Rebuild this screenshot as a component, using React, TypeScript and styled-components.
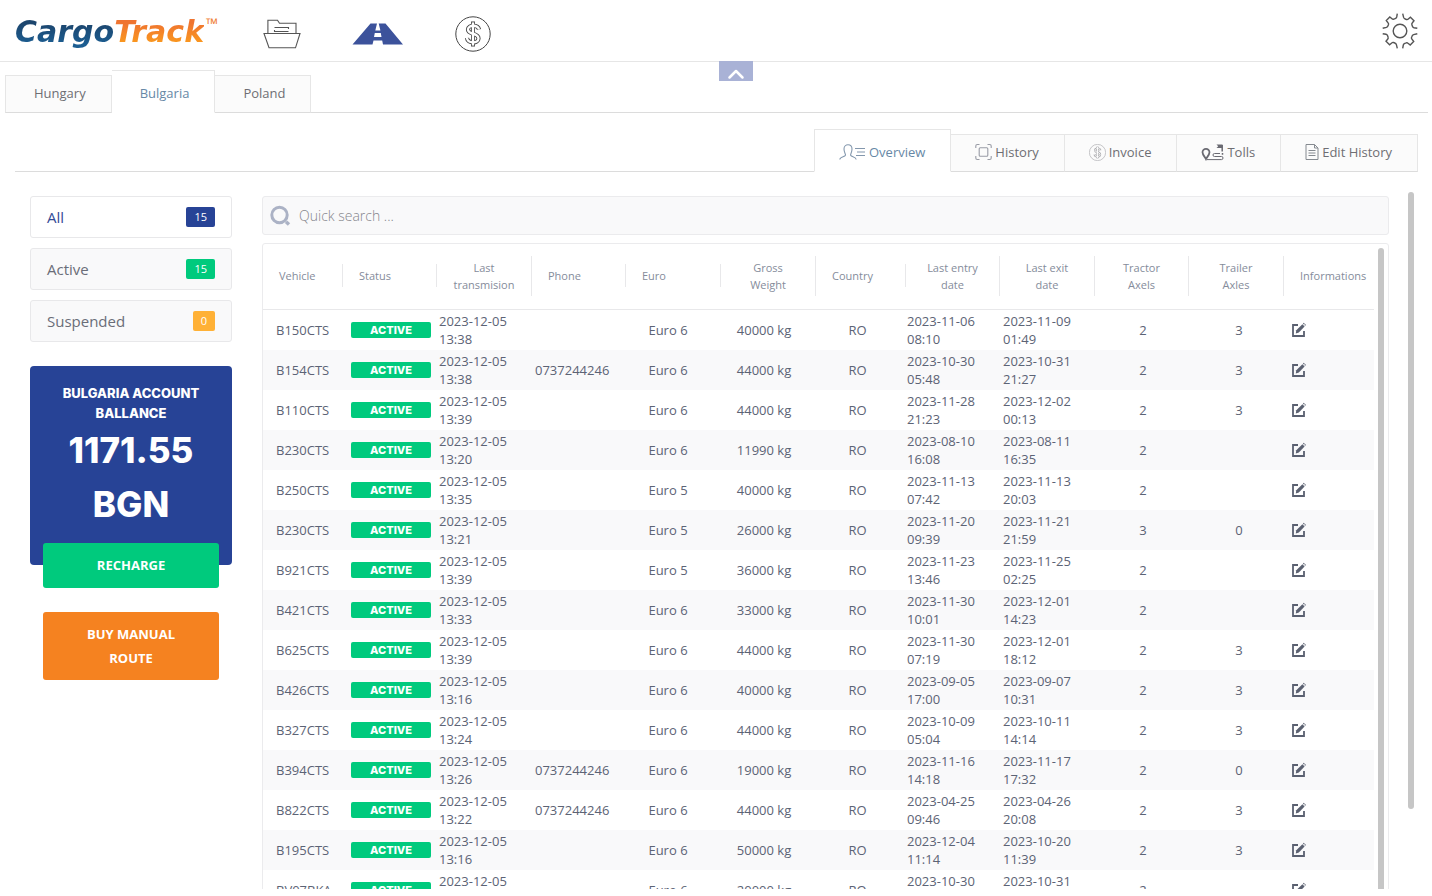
import React from "react";
import styled, { createGlobalStyle, css } from "styled-components";

const GlobalStyle = createGlobalStyle`
  *, *::before, *::after { box-sizing: border-box; }
  body {
    margin: 0;
    background: #fff;
    color: #5c6375;
    font-family: "Open Sans", "Noto Sans", sans-serif;
    font-size: 13px;
  }
  button, input { font-family: inherit; }
  a { color: inherit; text-decoration: none; }
`;

const Shell = styled.div`
  display: flex;
  flex-direction: column;
  height: 100vh;
  padding-bottom: 7px;
  overflow: hidden;
`;

/* ---------- header ---------- */

const Header = styled.header`
  position: relative;
  display: flex;
  align-items: center;
  flex: none;
  height: 62px;
  padding: 0 14px 0 15px;
  border-bottom: 1px solid #e6e6e6;
`;

const Logo = styled.a`
  display: flex;
  align-items: flex-start;
  gap: 2px;
  width: 202px;
  margin-right: 46px;
  padding-top: 2px;
  font: italic bold 30px/36px "DejaVu Sans", sans-serif;
`;

const LogoName = styled.span`
  display: flex;
`;

const LogoPart = styled.span<{ $from: string; $to: string }>`
  background: linear-gradient(${(p) => p.$from} 25%, ${(p) => p.$to} 85%);
  background-clip: text;
  -webkit-background-clip: text;
  color: transparent;
`;

const Trademark = styled.sup`
  color: #f08038;
  font: 16px/20px "Open Sans", sans-serif;
`;

const MainNav = styled.nav`
  display: flex;
  align-items: center;
  gap: 51px;
  flex: 1;
`;

const NavLink = styled.a`
  display: flex;
  padding-top: 6px;
`;

const IconButton = styled.button`
  display: flex;
  padding: 0;
  border: 0;
  background: none;
`;

const CollapseButton = styled.button`
  position: absolute;
  top: 61px;
  left: calc(50% + 3px);
  display: flex;
  justify-content: center;
  width: 34px;
  height: 20px;
  padding: 7px 0 0;
  border: 0;
  background: #a9b2d6;
`;

/* ---------- tabs ---------- */

const TabBar = styled.nav<{ $end?: boolean }>`
  display: flex;
  align-items: flex-end;
  flex: none;
  height: ${(p) => (p.$end ? 59 : 51)}px;
  margin: ${(p) => (p.$end ? "0 14px 0 15px" : "0 4px 0 5px")};
  justify-content: ${(p) => (p.$end ? "flex-end" : "flex-start")};
  border-bottom: 1px solid #dcdcdc;
`;

const Tab = styled.a<{ $active?: boolean; $wide?: boolean }>`
  display: flex;
  align-items: center;
  gap: 3px;
  margin-bottom: -1px;
  padding: 0 25px 2px ${(p) => (p.$wide ? 28 : 24)}px;
  border: 1px solid #e6e6e6;
  border-left-width: 0;
  border-bottom-color: #dcdcdc;
  background: #fbfbfb;
  color: #6e6e73;
  line-height: 34px;
  &:first-child { border-left-width: 1px; }
  ${(p) =>
    p.$active &&
    css`
      padding-top: 5px;
      border-bottom-color: #fff;
      background: #fff;
      color: #6788a6;
    `}
`;

/* ---------- content ---------- */

const Content = styled.div`
  display: flex;
  align-items: flex-start;
  flex: 1;
  min-height: 0;
  overflow: hidden;
  padding: 20px 18px 0 30px;
`;

const Sidebar = styled.aside`
  flex: none;
  width: 202px;
  margin: 4px 30px 0 0;
`;

const FilterList = styled.div`
  display: flex;
  flex-direction: column;
  gap: 10px;
`;

const FilterButton = styled.button<{ $selected?: boolean }>`
  display: flex;
  align-items: center;
  justify-content: space-between;
  height: 42px;
  padding: 0 16px;
  border: 1px solid #e8e8ea;
  border-radius: 3px;
  background: ${(p) => (p.$selected ? "#fff" : "#f9f9fa")};
  color: ${(p) => (p.$selected ? "#344b96" : "#6a6d78")};
  font-size: 15px;
`;

const Count = styled.span<{ $color: string }>`
  padding: 0 8px;
  border-radius: 2px;
  background: ${(p) => p.$color};
  color: #fff;
  font-size: 11px;
  line-height: 20px;
`;

const BalanceCard = styled.section`
  display: flex;
  flex-direction: column;
  margin-top: 24px;
  padding: 17px 13px 0;
  border-radius: 4px;
  background: #274396;
  color: #fff;
  font-family: Inter, sans-serif;
  text-align: center;
`;

const BalanceTitle = styled.h2`
  margin: 0;
  font-size: 13px;
  font-weight: 800;
  line-height: 20px;
`;

const BalanceAmount = styled.p`
  margin: 0 20px;
  font-size: 35px;
  font-weight: 800;
  line-height: 54px;
`;

const ActionButton = styled.button<{ $color: string }>`
  padding: 10px 30px;
  border: 0;
  border-radius: 3px;
  background: ${(p) => p.$color};
  color: #fff;
  font: bold 13px/24px "Open Sans", sans-serif;
`;

const RechargeButton = styled(ActionButton)`
  height: 45px;
  margin: 12px 0 -23px;
  padding-bottom: 12px;
`;

const RouteButton = styled(ActionButton)`
  width: 176px;
  margin: 47px 13px 0;
`;

const Main = styled.main`
  flex: 1;
  min-width: 0;
  margin-top: 4px;
`;

const SearchBox = styled.label`
  display: flex;
  align-items: center;
  gap: 8px;
  height: 39px;
  padding: 0 7px;
  border: 1px solid #ebebed;
  border-radius: 3px;
  background: #f9f9fa;
`;

const SearchInput = styled.input`
  flex: 1;
  padding: 0;
  border: 0;
  outline: 0;
  background: none;
  color: #5c6375;
  font-size: 14px;
  font-weight: 300;
  &::placeholder { color: #85858c; opacity: 1; }
`;

const TablePanel = styled.div`
  display: flex;
  align-items: flex-start;
  gap: 4px;
  margin-top: 8px;
  padding-right: 4px;
  border: 1px solid #ebebed;
  border-radius: 3px;
`;

const Thumb = styled.div`
  flex: none;
  width: 6px;
  border-radius: 3px;
  background: #c6c6c6;
`;

const TableThumb = styled(Thumb)`
  align-self: stretch;
  margin-top: 4px;
`;

const PageThumb = styled(Thumb)`
  height: 617px;
  margin-left: 19px;
`;

const Table = styled.table`
  display: block;
  flex: 1;
  min-width: 0;
`;

const Head = styled.thead`
  display: block;
  border-bottom: 1px solid #e8e8ea;
`;

const Body = styled.tbody`
  display: block;
`;

const HeadRow = styled.tr`
  display: grid;
  grid-template-columns: 80fr 94fr 95fr 94fr 95fr 95fr 90fr 94fr 95fr 94fr 95fr 90fr;
  align-items: center;
  height: 65px;
  padding-bottom: 2px;
`;

const HeadCell = styled.th`
  display: flex;
  min-width: 0;
  padding: 3px 16px;
  border-right: 1px solid #e8e8ea;
  color: #858c9b;
  font-size: 11px;
  font-weight: 400;
  line-height: 17px;
  text-align: center;
  &:last-child { border-right: 0; }
`;

const BodyRow = styled.tr`
  display: grid;
  grid-template-columns: 84fr 88fr 96fr 89fr 96fr 96fr 91fr 96fr 96fr 96fr 96fr 87fr;
  align-items: center;
  height: 40px;
  &:nth-child(even) { background: #f9f9fa; }
`;

const Cell = styled.td<{ $align?: "left" | "center" }>`
  min-width: 0;
  padding: 0 4px;
  line-height: 18px;
  text-align: ${(p) => p.$align ?? "left"};
`;

const VehicleCell = styled(Cell)`
  padding-left: 13px;
`;

const DateText = styled.time`
  display: block;
  width: 72px;
`;

const StatusTag = styled.span`
  display: block;
  border-radius: 2px;
  background: #00ca7d;
  color: #fff;
  font: 800 11px/16px Inter, sans-serif;
  text-align: center;
`;

/* ---------- icons ---------- */

const FolderIcon = () => (
  <svg width="38" height="30" viewBox="0 0 38 30" fill="none" stroke="#555" strokeWidth="1.1">
    <path d="M4.900 14.500V1.200H14.500L16.500 4.300H33V14.500M1 14.500H37L32.500 28.800H6ZM11.500 8.500H25.500V10M25.500 12.500H11.500V11" />
  </svg>
);

const RoadIcon = () => (
  <svg width="52" height="22" viewBox="0 0 52 22" fill="#3c529b" fillRule="evenodd">
    <path d="M18.500 .5H33.500L51 21.500H.5ZM25 .5L23.300 7.500H28.400L26.700 .5ZM22.800 10L22 14H29.500L28.800 10ZM21.500 17.500L20.500 21.500H31L30.200 17.500Z" />
  </svg>
);

const DollarIcon = ({ size, width, color }: { size: number; width: number; color: string }) => (
  <svg width={size} height={size} viewBox="0 0 36 36" fill="none" stroke={color}>
    <circle cx="18" cy="18" r="17.200" strokeWidth={width} />
    <path d="M18 5.500V30.500" strokeWidth={3 + width} />
    <path d="M24 13.500C23 8.500 13 8.500 13 13.500C13 19 23.500 16.500 23.500 22.500C23.500 28 12.500 27.500 12 22" strokeWidth={3.2 + width} />
    <path d="M18 6.400V29.600" stroke="#fff" strokeWidth={3.4 - width} />
    <path d="M24 13.500C23 8.500 13 8.500 13 13.500C13 19 23.500 16.500 23.500 22.500C23.500 28 12.500 27.500 12 22" stroke="#fff" strokeWidth={3.4 - width} />
  </svg>
);

const GearIcon = () => (
  <svg width="36" height="36" viewBox="-18 -18 36 36" fill="none" stroke="#555" strokeWidth="1.400">
    <circle r="6.800" />
    {[0, 90, 180, 270].map((angle) => (
      <path
        key={angle}
        transform={`rotate(${angle})`}
        d="M2.700-17.300L3.600-13.600Q4-12.400 5.200-12L6.500-11.500Q7.500-11.200 8.300-12L10.400-13.700L14-10.200L12.200-8Q11.500-7.200 11.900-6.200L12.400-4.800Q12.800-3.600 14-3.300L17.300-2.700"
      />
    ))}
  </svg>
);

const ChevronUpIcon = () => (
  <svg width="18" height="12" viewBox="0 0 18 12" fill="none" stroke="#fff" strokeWidth="2.500" strokeLinecap="round" strokeLinejoin="round">
    <path d="M2.500 9.500L9 3L15.500 9.500" />
  </svg>
);

const PersonIcon = () => (
  <svg width="27" height="18" viewBox="0 0 27 18" fill="none" stroke="#8397ad" strokeWidth="1.100">
    <path d="M.8 16.500C1 13.500 5.500 14 6.500 12.200C6.900 11.400 5 9.800 5 6C5 .4 13 .4 13 6C13 9.800 11.200 11.400 11.600 12.200C12.500 14 17 13.500 17.200 16.500M16 5.500H26M18 9H26M17 12.500H26" />
  </svg>
);

const FrameIcon = () => (
  <svg width="17" height="18" viewBox="0 0 17 18" fill="none" stroke="#999ca6" strokeWidth="1.100">
    <path d="M.8 5V3Q.8 1.500 2.300 1.500H4.500M12.500 1.500H14.700Q16.200 1.500 16.200 3V5M16.200 13V15Q16.200 16.500 14.700 16.500H12.500M4.500 16.500H2.300Q.8 16.500 .8 15V13" />
    <rect x="4.200" y="4.700" width="8.600" height="8.600" rx="1" />
  </svg>
);

const TollsIcon = () => (
  <svg width="23" height="18" viewBox="0 0 23 18" fill="none" stroke="#6a6a72" strokeWidth="1.200">
    <path d="M5 16C4.200 14.300 1.500 12 1.500 9.300A3.500 3.500 0 0 1 8.500 9.300C8.500 12 5.800 14.300 5 16Z" strokeWidth="1.800" />
    <path d="M6 16.600H20.500Q22 16.600 22 15T20.500 13.500H13.500Q12 13.500 12 12T13.500 10.500H19" strokeWidth="1" />
    <path d="M21.200 2V8.500M21.500 10V11.800" strokeWidth="1.500" />
    <path d="M21.500 1.500H15.500L17.200 3.300L15.500 5H21.500Z" fill="#6a6a72" stroke="none" />
  </svg>
);

const DocumentIcon = () => (
  <svg width="14" height="18" viewBox="0 0 14 18" fill="none" stroke="#858a90" strokeWidth="1">
    <path d="M1 1.500H9.500L13 5V16.500H1ZM9.500 1.500V5H13M3.500 7.500H10.500M3.500 10H10.500M3.500 12.500H10.500" />
  </svg>
);

const SearchIcon = () => (
  <svg width="21" height="22" viewBox="0 0 21 22" fill="none" stroke="#abb2c5" strokeWidth="3">
    <circle cx="9.500" cy="10" r="7.700" />
    <path d="M16 16.800L19 19.500" strokeWidth="3.500" />
  </svg>
);

const EditIcon = () => (
  <svg width="16" height="16" viewBox="0 0 16 16" fill="none" stroke="#5a6070" strokeWidth="1.800">
    <path d="M7 3H2V14H13V9" />
    <path d="M4.800 11.400L5.300 8.200L11.400 2.200L13.600 4.400L7.800 10.500Z" fill="#5a6070" stroke="none" />
    <path d="M12.400 1.200L14.600 3.400" strokeWidth="1.200" strokeDasharray="1.200 .6" />
  </svg>
);

/* ---------- data ---------- */

const columns = [
  "Vehicle", "Status", "Last transmision", "Phone", "Euro", "Gross Weight", "Country",
  "Last entry date", "Last exit date", "Tractor Axels", "Trailer Axles", "Informations",
];

type Vehicle = [
  plate: string, seen: string, phone: string, euro: string, weight: string,
  entry: string, exit: string, tractor: string, trailer: string,
];

const vehicles: Vehicle[] = [
  ["B150CTS", "13:38", "", "6", "40000", "2023-11-06 08:10", "2023-11-09 01:49", "2", "3"],
  ["B154CTS", "13:38", "0737244246", "6", "44000", "2023-10-30 05:48", "2023-10-31 21:27", "2", "3"],
  ["B110CTS", "13:39", "", "6", "44000", "2023-11-28 21:23", "2023-12-02 00:13", "2", "3"],
  ["B230CTS", "13:20", "", "6", "11990", "2023-08-10 16:08", "2023-08-11 16:35", "2", ""],
  ["B250CTS", "13:35", "", "5", "40000", "2023-11-13 07:42", "2023-11-13 20:03", "2", ""],
  ["B230CTS", "13:21", "", "5", "26000", "2023-11-20 09:39", "2023-11-21 21:59", "3", "0"],
  ["B921CTS", "13:39", "", "5", "36000", "2023-11-23 13:46", "2023-11-25 02:25", "2", ""],
  ["B421CTS", "13:33", "", "6", "33000", "2023-11-30 10:01", "2023-12-01 14:23", "2", ""],
  ["B625CTS", "13:39", "", "6", "44000", "2023-11-30 07:19", "2023-12-01 18:12", "2", "3"],
  ["B426CTS", "13:16", "", "6", "40000", "2023-09-05 17:00", "2023-09-07 10:31", "2", "3"],
  ["B327CTS", "13:24", "", "6", "44000", "2023-10-09 05:04", "2023-10-11 14:14", "2", "3"],
  ["B394CTS", "13:26", "0737244246", "6", "19000", "2023-11-16 14:18", "2023-11-17 17:32", "2", "0"],
  ["B822CTS", "13:22", "0737244246", "6", "44000", "2023-04-25 09:46", "2023-04-26 20:08", "2", "3"],
  ["B195CTS", "13:16", "", "6", "50000", "2023-12-04 11:14", "2023-10-20 11:39", "2", "3"],
  ["BV07BKA", "13:30", "", "6", "20000", "2023-10-30 09:12", "2023-10-31 18:40", "2", ""],
];

const filters = [
  { label: "All", count: 15, color: "#274396" },
  { label: "Active", count: 15, color: "#00ca7d" },
  { label: "Suspended", count: 0, color: "#ffb136" },
];

const views = [
  { label: "Overview", icon: <PersonIcon /> },
  { label: "History", icon: <FrameIcon /> },
  { label: "Invoice", icon: <DollarIcon size={17} width={1.4} color="#aaaaae" /> },
  { label: "Tolls", icon: <TollsIcon /> },
  { label: "Edit History", icon: <DocumentIcon /> },
];

export default function App() {
  return (
    <Shell>
      <GlobalStyle />
      <Header>
        <Logo href="#">
          <LogoName>
            <LogoPart $from="#1c456d" $to="#1c5e92">Cargo</LogoPart>
            <LogoPart $from="#ef7430" $to="#fb9b1d">Track</LogoPart>
          </LogoName>
          <Trademark>™</Trademark>
        </Logo>
        <MainNav aria-label="Main">
          <NavLink href="#documents" aria-label="Documents"><FolderIcon /></NavLink>
          <NavLink href="#roads" aria-label="Roads"><RoadIcon /></NavLink>
          <NavLink href="#payments" aria-label="Payments"><DollarIcon size={36} width={1} color="#444" /></NavLink>
        </MainNav>
        <IconButton aria-label="Settings"><GearIcon /></IconButton>
        <CollapseButton aria-label="Collapse"><ChevronUpIcon /></CollapseButton>
      </Header>

      <TabBar aria-label="Country">
        {["Hungary", "Bulgaria", "Poland"].map((name) => (
          <Tab key={name} href={`#${name}`} $wide $active={name === "Bulgaria"}>{name}</Tab>
        ))}
      </TabBar>
      <TabBar $end aria-label="View">
        {views.map((view, i) => (
          <Tab key={view.label} href="#view" $active={i === 0}>{view.icon}{view.label}</Tab>
        ))}
      </TabBar>

      <Content>
        <Sidebar>
          <FilterList>
            {filters.map((f, i) => (
              <FilterButton key={f.label} $selected={i === 0}>
                {f.label}
                <Count $color={f.color}>{f.count}</Count>
              </FilterButton>
            ))}
          </FilterList>
          <BalanceCard>
            <BalanceTitle>BULGARIA ACCOUNT BALLANCE</BalanceTitle>
            <BalanceAmount>1171.55 BGN</BalanceAmount>
            <RechargeButton $color="#00ca7d">RECHARGE</RechargeButton>
          </BalanceCard>
          <RouteButton $color="#f58220">BUY MANUAL ROUTE</RouteButton>
        </Sidebar>

        <Main>
          <SearchBox>
            <SearchIcon />
            <SearchInput type="text" aria-label="Quick search" placeholder="Quick search ..." />
          </SearchBox>
          <TablePanel>
            <Table>
              <Head>
                <HeadRow>
                  {columns.map((name) => (
                    <HeadCell key={name} scope="col"><span>{name}</span></HeadCell>
                  ))}
                </HeadRow>
              </Head>
              <Body>
                {vehicles.map(([plate, seen, phone, euro, weight, entry, exit, tractor, trailer], i) => (
                  <BodyRow key={i}>
                    <VehicleCell>{plate}</VehicleCell>
                    <Cell><StatusTag>ACTIVE</StatusTag></Cell>
                    <Cell><DateText>2023-12-05 {seen}</DateText></Cell>
                    <Cell>{phone}</Cell>
                    <Cell $align="center">Euro {euro}</Cell>
                    <Cell $align="center">{weight} kg</Cell>
                    <Cell $align="center">RO</Cell>
                    <Cell><DateText>{entry}</DateText></Cell>
                    <Cell><DateText>{exit}</DateText></Cell>
                    <Cell $align="center">{tractor}</Cell>
                    <Cell $align="center">{trailer}</Cell>
                    <Cell><IconButton aria-label={`Edit ${plate}`}><EditIcon /></IconButton></Cell>
                  </BodyRow>
                ))}
              </Body>
            </Table>
            <TableThumb />
          </TablePanel>
        </Main>
        <PageThumb />
      </Content>
    </Shell>
  );
}
